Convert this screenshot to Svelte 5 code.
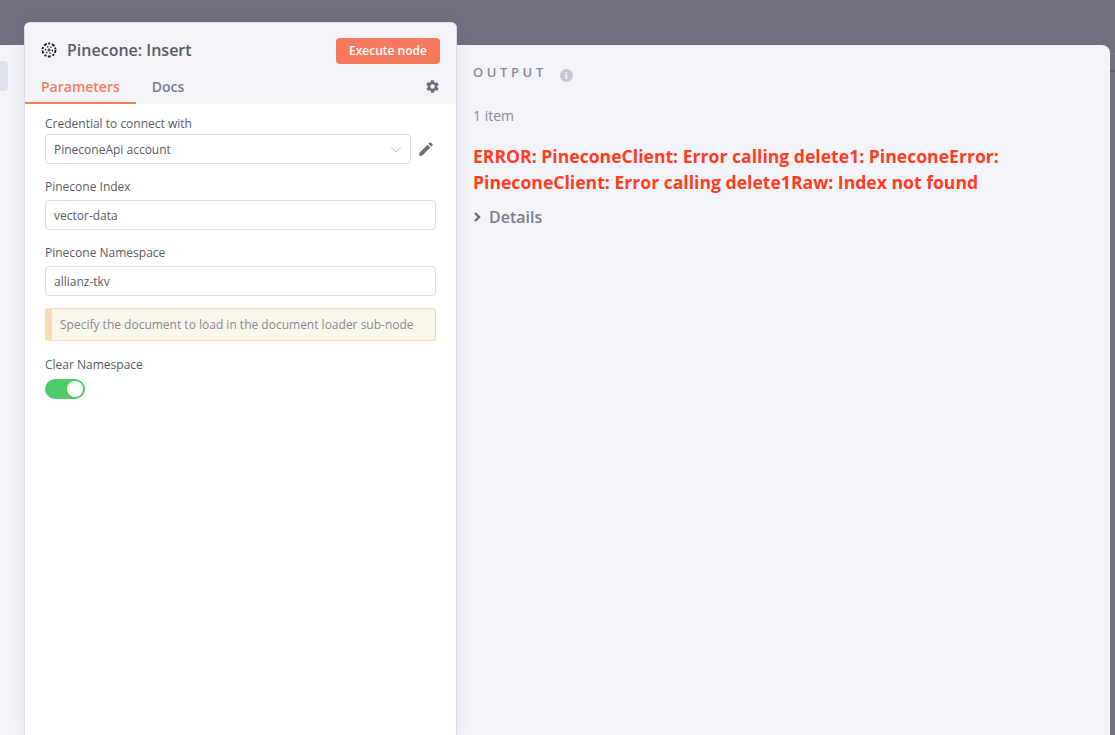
<script lang="ts">
	const fields = [
		{ label: 'Pinecone Index', value: 'vector-data' },
		{ label: 'Pinecone Namespace', value: 'allianz-tkv' }
	];
</script>

<div class="page">
	<div class="topbar"></div>
	<div class="canvas">
		<div class="gutter"><div class="stub"></div></div>

		<section class="input-panel">
			<header class="node-head">
				<div class="title">
					<svg class="logo" viewBox="0 0 16 16" fill="none" stroke="#1b1b1f" stroke-width="1.9">
						<circle cx="8" cy="8" r="6.5" stroke-dasharray="3 1.4 2 1.8" />
						<circle cx="8" cy="8" r="3.4" stroke-width="1.3" stroke-dasharray="1.4 2" />
						<path d="M8 6.4v3.2M6.4 8h3.2" stroke-width="1.1" />
					</svg>
					<span>Pinecone: Insert</span>
				</div>
				<button class="run">Execute node</button>
			</header>

			<div class="tabs">
				<span class="tab active">Parameters</span>
				<span class="tab">Docs</span>
				<svg class="gear" viewBox="0 0 24 24" fill="#6d6c79">
					<path d="M19.4 13a7.6 7.6 0 0 0 0-2l2.1-1.6a.5.5 0 0 0 .1-.6l-2-3.5a.5.5 0 0 0-.6-.2l-2.5 1a7.3 7.3 0 0 0-1.7-1l-.4-2.6a.5.5 0 0 0-.5-.4h-4a.5.5 0 0 0-.5.4l-.4 2.6a7.7 7.7 0 0 0-1.7 1l-2.5-1a.5.5 0 0 0-.6.2l-2 3.5a.5.5 0 0 0 .1.6L4.6 11a7.9 7.9 0 0 0 0 2l-2.1 1.6a.5.5 0 0 0-.1.6l2 3.5c.1.2.4.3.6.2l2.5-1c.5.4 1.1.7 1.7 1l.4 2.6c0 .2.3.4.5.4h4c.2 0 .5-.2.5-.4l.4-2.6a7.7 7.7 0 0 0 1.7-1l2.5 1c.2.1.5 0 .6-.2l2-3.5a.5.5 0 0 0-.1-.6L19.4 13zM12 15.5a3.5 3.5 0 1 1 0-7 3.5 3.5 0 0 1 0 7z" />
				</svg>
			</div>

			<div class="params">
				<div class="field first">
					<span class="label">Credential to connect with</span>
					<div class="cred-row">
						<div class="input select">
							<span>PineconeApi account</span>
							<svg class="chevron" viewBox="0 0 12 7" fill="none" stroke="#c4c6d2" stroke-width="1">
								<path d="M1 1l5 5 5-5" />
							</svg>
						</div>
						<svg class="pencil" viewBox="0 0 24 24" fill="#6d6c79">
							<path d="M3 17.25V21h3.75L17.81 9.94l-3.75-3.75L3 17.25zM20.71 7.04a1 1 0 0 0 0-1.41l-2.34-2.34a1 1 0 0 0-1.41 0l-1.83 1.83 3.75 3.75 1.83-1.83z" />
						</svg>
					</div>
				</div>

				{#each fields as field}
					<div class="field">
						<span class="label">{field.label}</span>
						<div class="input">{field.value}</div>
					</div>
				{/each}

				<div class="notice">Specify the document to load in the document loader sub-node</div>

				<div class="field toggle-field">
					<span class="label">Clear Namespace</span>
					<div class="toggle"><div class="knob"></div></div>
				</div>
			</div>
		</section>

		<section class="output">
			<div class="output-head">
				<span class="output-title">OUTPUT</span>
				<span class="info">i</span>
			</div>
			<div class="count">1 item</div>
			<div class="error">ERROR: PineconeClient: Error calling delete1: PineconeError: PineconeClient: Error calling delete1Raw: Index not found</div>
			<div class="details">
				<svg class="caret" viewBox="0 0 8 12" fill="none" stroke="#6d6c79" stroke-width="2.4">
					<path d="M2 2l4 4-4 4" />
				</svg>
				<span>Details</span>
			</div>
		</section>

		<div class="edge"></div>
	</div>
</div>

<style>
	:global(body) {
		margin: 0;
		background: #72707f;
		overflow: hidden;
	}

	.page {
		height: 735px;
		display: flex;
		flex-direction: column;
		font-family: 'Open Sans', sans-serif;
		color: #5b5a66;
	}

	.topbar {
		height: 45px;
		flex-shrink: 0;
	}

	.canvas {
		flex: 1;
		display: flex;
		align-items: flex-start;
		min-height: 0;
	}

	.gutter {
		width: 24px;
		height: 690px;
		flex-shrink: 0;
		background: #f3f4f9;
		padding-top: 16px;
		box-sizing: border-box;
	}

	.stub {
		width: 8px;
		height: 30px;
		background: #dfe1ea;
		border-radius: 0 4px 4px 0;
	}

	.input-panel {
		width: 433px;
		height: 713px;
		margin-top: -23px;
		background: #fff;
		border: 1px solid #dbdde6;
		border-bottom: none;
		border-radius: 6px 6px 0 0;
		box-sizing: border-box;
		flex-shrink: 0;
		overflow: hidden;
		box-shadow: 0 0 16px rgba(50, 50, 93, 0.08);
		z-index: 1;
	}

	.node-head {
		display: flex;
		justify-content: space-between;
		align-items: center;
		height: 54px;
		padding: 1px 16px 0 16px;
		box-sizing: border-box;
		background: #f3f4f9;
	}

	.title {
		display: flex;
		align-items: center;
		gap: 10px;
		margin-top: -2px;
		font-size: 16px;
		font-weight: 600;
		color: #5b5a66;
	}

	.logo {
		width: 16px;
		height: 16px;
	}

	.run {
		width: 104px;
		height: 26px;
		padding: 0;
		border: none;
		border-radius: 4px;
		background: #f7795e;
		color: #fff;
		font-family: inherit;
		font-size: 12px;
		font-weight: 600;
	}

	.tabs {
		display: flex;
		align-items: flex-start;
		height: 27px;
		background: #f3f4f9;
		position: relative;
	}

	.tab {
		padding: 0 16px;
		height: 27px;
		box-sizing: border-box;
		font-size: 14px;
		font-weight: 600;
		line-height: 19px;
		color: #7d7c89;
	}

	.tab.active {
		color: #f7795e;
		border-bottom: 2px solid #f7795e;
	}

	.gear {
		position: absolute;
		right: 16px;
		top: 2px;
		width: 15px;
		height: 15px;
	}

	.params {
		padding: 0 20px;
	}

	.field {
		margin-top: 15px;
	}

	.field.first {
		margin-top: 12px;
	}

	.label {
		display: block;
		font-size: 12px;
		line-height: 16px;
		margin-bottom: 5px;
		color: #5b5a66;
	}

	.first .label {
		margin-bottom: 2px;
	}

	.input {
		height: 30px;
		box-sizing: border-box;
		padding: 0 8px;
		display: flex;
		align-items: center;
		justify-content: space-between;
		background: #fff;
		border: 1px solid #dbdde6;
		border-radius: 4px;
		font-size: 12px;
		color: #5b5a66;
	}

	.cred-row {
		display: flex;
		align-items: center;
		gap: 6px;
	}

	.select {
		flex: 1;
	}

	.chevron {
		width: 12px;
		height: 7px;
	}

	.pencil {
		width: 18px;
		height: 18px;
		margin-right: 1px;
	}

	.notice {
		margin-top: 12px;
		height: 33px;
		box-sizing: border-box;
		padding-left: 8px;
		display: flex;
		align-items: center;
		background: #fbf6ec;
		border: 1px solid #f5dfb6;
		border-left: 7px solid #f5dcb3;
		border-radius: 3px;
		font-size: 12px;
		color: #8a8995;
	}

	.toggle-field {
		margin-top: 16px;
	}

	.toggle-field .label {
		margin-bottom: 6px;
	}

	.toggle {
		width: 40px;
		height: 20px;
		box-sizing: border-box;
		padding: 2px;
		display: flex;
		justify-content: flex-end;
		background: #4fcb6c;
		border-radius: 10px;
	}

	.knob {
		width: 16px;
		height: 16px;
		border-radius: 50%;
		background: #fff;
	}

	.output {
		flex: 1;
		height: 690px;
		box-sizing: border-box;
		background: #f3f4f9;
		border-radius: 0 8px 0 0;
		padding: 19px 16px 0;
		min-width: 0;
	}

	.output-head {
		display: flex;
		align-items: center;
		gap: 13px;
		height: 20px;
	}

	.output-title {
		margin-top: -4px;
		font-size: 13px;
		font-weight: 600;
		letter-spacing: 3.6px;
		color: #8a8995;
	}

	.info {
		width: 13px;
		height: 13px;
		margin-top: 3px;
		border-radius: 50%;
		background: #c5c6d0;
		color: #f3f4f9;
		font-size: 9px;
		font-weight: 800;
		line-height: 13px;
		text-align: center;
	}

	.count {
		margin-top: 23px;
		font-size: 14px;
		line-height: 18px;
		color: #8a8995;
	}

	.error {
		margin-top: 18px;
		width: 620px;
		font-size: 17.6px;
		font-weight: 700;
		line-height: 26px;
		color: #ff3d1f;
	}

	.details {
		margin-top: 12px;
		display: flex;
		align-items: center;
		gap: 8px;
		font-size: 16px;
		font-weight: 600;
		line-height: 20px;
		color: #7d7c89;
	}

	.caret {
		width: 8px;
		height: 12px;
	}

	.edge {
		width: 5px;
		flex-shrink: 0;
		height: 19px;
		box-sizing: border-box;
		border-top: 1px solid #7f7d8b;
		border-bottom: 2px solid #605e6d;
		margin-top: 8px;
	}
</style>
